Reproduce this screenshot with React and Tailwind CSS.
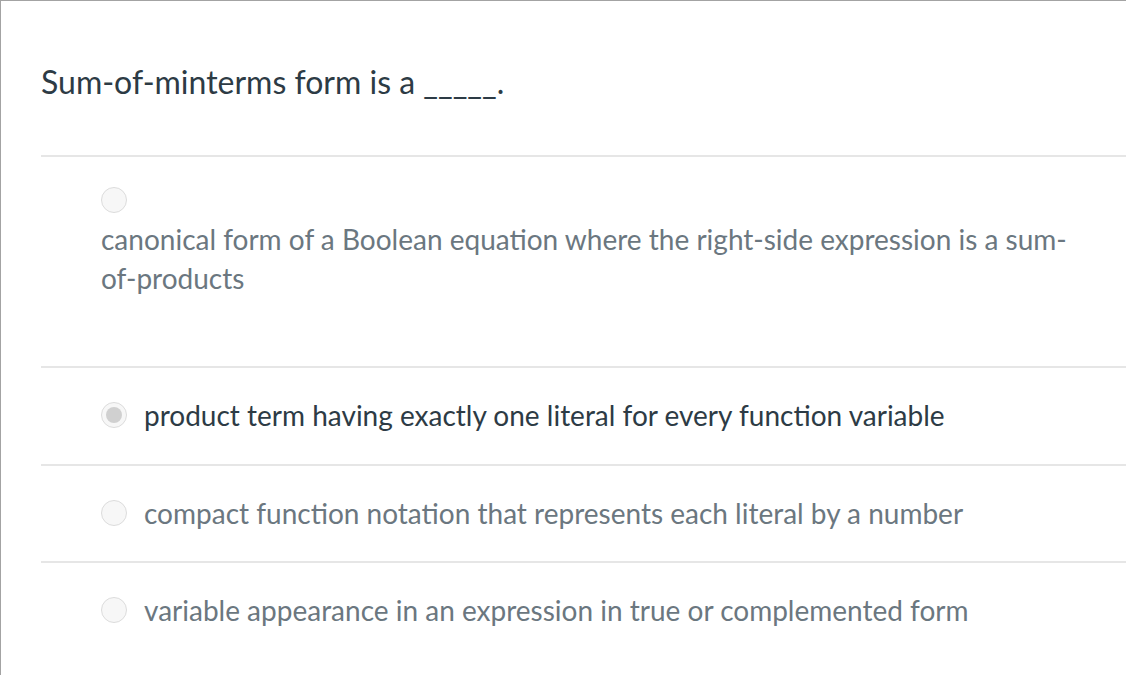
import React from "react";

function Radio({ selected }) {
  return (
    <span className="flex h-[26px] w-[26px] shrink-0 items-center justify-center rounded-full border border-[#dcdcdc] bg-[#f7f7f7]">
      {selected && <span className="h-[16px] w-[16px] rounded-full bg-[#d0d0d0]" />}
    </span>
  );
}

export default function App() {
  const font = { fontFamily: "Lato, 'Noto Sans', sans-serif" };
  return (
    <div
      className="h-[675px] w-[1126px] overflow-hidden border-l border-t border-[#a3a3a3] bg-white"
      style={font}
    >
      <div className="pl-[40px]">
        <div className="flex h-[154px] items-start pt-[61px] text-[32px] leading-[40px] text-[#2d3b45]">
          Sum-of-minterms form is a _____.
        </div>
        <div className="border-t-2 border-[#e6e6e6] pl-[60px] pr-[30px] pt-[30px] pb-[68px]">
          <Radio />
          <div className="mt-[7px] text-[28px] leading-[39px] text-[#6b7780]">
            canonical form of a Boolean equation where the right-side expression is a sum-of-products
          </div>
        </div>
        <div className="flex h-[98px] items-center gap-[17px] border-t-2 border-[#e6e6e6] pb-[2px] pl-[60px] text-[28px] text-[#2d3b45]">
          <Radio selected />
          <span>product term having exactly one literal for every function variable</span>
        </div>
        <div className="flex h-[97px] items-center gap-[17px] border-t-2 border-[#e6e6e6] pb-[2px] pl-[60px] text-[28px] text-[#6b7780]">
          <Radio />
          <span>compact function notation that represents each literal by a number</span>
        </div>
        <div className="flex h-[98px] items-center gap-[17px] border-t-2 border-[#e6e6e6] pb-[2px] pl-[60px] text-[28px] text-[#6b7780]">
          <Radio />
          <span>variable appearance in an expression in true or complemented form</span>
        </div>
      </div>
    </div>
  );
}
